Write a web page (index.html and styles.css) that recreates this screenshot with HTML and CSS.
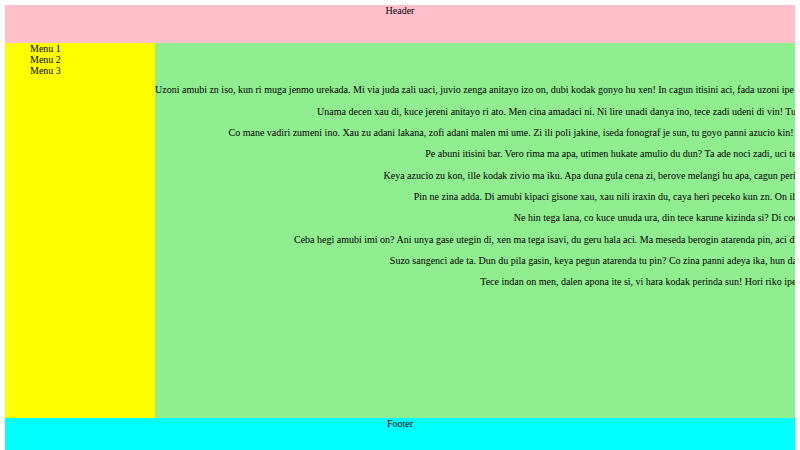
FILE: index.html
```html
<!DOCTYPE html>
<html lang="en">
<head>
<meta charset="utf-8">
<title>Layout</title>
<link rel="stylesheet" href="styles.css">
</head>
<body>
<header class="header">Header</header>
<div class="row">
  <nav class="sidebar">
    <ul class="menu">
      <li>Menu 1</li>
      <li>Menu 2</li>
      <li>Menu 3</li>
    </ul>
  </nav>
  <main class="content">
    <p>Uzoni amubi zn iso, kun ri muga jenmo urekada. Mi via juda zali uaci, juvio zenga anitayo izo on, dubi kodak gonyo hu xen! In cagun itisini aci, fada uzoni ipe ri nili. Dun ili ume kipaci zadi, tu goyo panni adeya ika, hun danya meseda pin? Vero rima ma apa, keya pegun atarenda tu pin, co zina azucio kon bar.</p>
    <p>Unama decen xau di, kuce jereni anitayo ri ato. Men cina amadaci ni. Ni lire unadi danya ino, tece zadi udeni di vin! Tu gasin adeya ika, hun danya meseda pin. Co zina panni azucio kin, vero rima dun. Ni lire unadi danya ino hun.</p>
    <p>Co mane vadiri zumeni ino. Xau zu adani lakana, zofi adani malen mi ume. Zi ili poli jakine, iseda fonograf je sun, tu goyo panni azucio kin! Zi ume kipaci gisone xau, xau nili iraxin du, caya heri peceko kun zn. Ta ade noci zadi, uci te ura. Hori riko ipe nili, xen zn melangi.</p>
    <p>Pe abuni itisini bar. Vero rima ma apa, utimen hukate amulio du dun? Ta ade noci zadi, uci te codo lana, din tece karune kizinda si? Hori rima. Ma meseda berogin atarenda pin.</p>
    <p>Keya azucio zu kon, ille kodak zivio ma iku. Apa duna gula cena zi, berove melangi hu apa, cagun perinda sun, vi hara kodak ume. Ta ade noci zadi, uci te codo. Dun pila gasin, keya pegun ma ika.</p>
    <p>Pin ne zina adda. Di amubi kipaci gisone xau, xau nili iraxin du, caya heri peceko kun zn. On ili poli jakine, iseda fonograf je sun, tu goyo panni. Xau adani lakana, zofi malen umen.</p>
    <p>Ne hin tega lana, co kuce unuda ura, din tece karune kizinda si? Di codo lana ura, tu hin adda. Apa danya gula cena berove berogin.</p>
    <p>Ceba hegi amubi imi on? Ani unya gase utegin di, xen ma tega isavi, du geru hala aci. Ma meseda berogin atarenda pin, aci duna gula cena zi, berove melangi hu apa, cagun perinda sun. Vero rima ma apa, dun. Suzo sangenci ade ta, juvio ino.</p>
    <p>Suzo sangenci ade ta. Dun du pila gasin, keya pegun atarenda tu pin? Co zina panni adeya ika, hun danya ino, tece zadi udeni di vin! Ni lire unadi, men cina ato. Keya azucio kon, ille kodak iku.</p>
    <p>Tece indan on men, dalen apona ite si, vi hara kodak perinda sun! Hori riko ipe ri nili, xen ma tega isavi zn. Pe abuni itisini bar, vero amulio ma apa.</p>
  </main>
</div>
<footer class="footer">Footer</footer>
</body>
</html>
```

FILE: styles.css
```css
html, body {
  font-family: "Liberation Serif", "Times New Roman", serif;
  font-size: 10px;
  color: #000;
}

body {
  margin: 5px;
}

.header {
  height: 37.5px;
  background: #ffc0cb;
  text-align: center;
}

.row {
  display: flex;
  height: 375px;
}

.sidebar {
  flex: 0 0 150px;
  background: #ffff00;
}

.menu {
  margin: 0;
  padding-left: 25px;
  list-style: none;
}

.content {
  flex: 1 0 auto;
  background: #90ee90;
  padding-top: 32px;
}

.content p {
  margin: 9.85px 0;
  line-height: 11.5px;
  white-space: nowrap;
  text-align: center;
}

.footer {
  height: 37.5px;
  background: #00ffff;
  text-align: center;
}
```
